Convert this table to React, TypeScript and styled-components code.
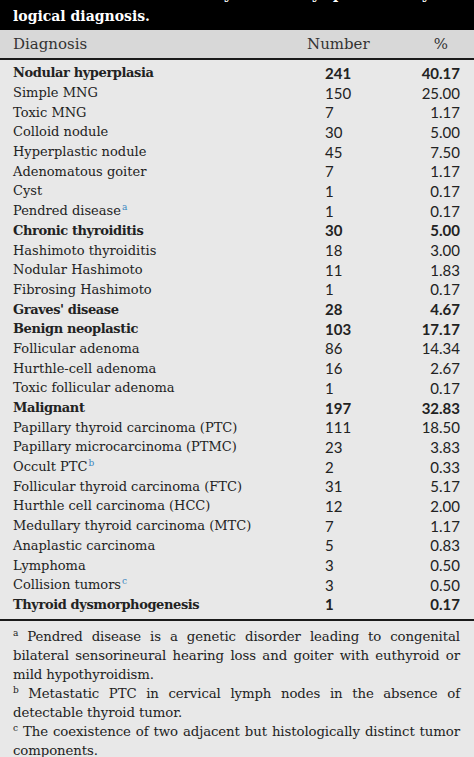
import React from 'react';
import styled, { createGlobalStyle } from 'styled-components';

const GlobalStyle = createGlobalStyle`
  html, body {
    margin: 0;
    padding: 0;
    background: #e8e8e8;
  }
`;

type RowType = {
    name: string
    number: string
    percent: string
    bold?: boolean
    note?: string
}

const rows: RowType[] = [
    { name: 'Nodular hyperplasia', number: '241', percent: '40.17', bold: true },
    { name: 'Simple MNG', number: '150', percent: '25.00' },
    { name: 'Toxic MNG', number: '7', percent: '1.17' },
    { name: 'Colloid nodule', number: '30', percent: '5.00' },
    { name: 'Hyperplastic nodule', number: '45', percent: '7.50' },
    { name: 'Adenomatous goiter', number: '7', percent: '1.17' },
    { name: 'Cyst', number: '1', percent: '0.17' },
    { name: 'Pendred disease', number: '1', percent: '0.17', note: 'a' },
    { name: 'Chronic thyroiditis', number: '30', percent: '5.00', bold: true },
    { name: 'Hashimoto thyroiditis', number: '18', percent: '3.00' },
    { name: 'Nodular Hashimoto', number: '11', percent: '1.83' },
    { name: 'Fibrosing Hashimoto', number: '1', percent: '0.17' },
    { name: "Graves' disease", number: '28', percent: '4.67', bold: true },
    { name: 'Benign neoplastic', number: '103', percent: '17.17', bold: true },
    { name: 'Follicular adenoma', number: '86', percent: '14.34' },
    { name: 'Hurthle-cell adenoma', number: '16', percent: '2.67' },
    { name: 'Toxic follicular adenoma', number: '1', percent: '0.17' },
    { name: 'Malignant', number: '197', percent: '32.83', bold: true },
    { name: 'Papillary thyroid carcinoma (PTC)', number: '111', percent: '18.50' },
    { name: 'Papillary microcarcinoma (PTMC)', number: '23', percent: '3.83' },
    { name: 'Occult PTC', number: '2', percent: '0.33', note: 'b' },
    { name: 'Follicular thyroid carcinoma (FTC)', number: '31', percent: '5.17' },
    { name: 'Hurthle cell carcinoma (HCC)', number: '12', percent: '2.00' },
    { name: 'Medullary thyroid carcinoma (MTC)', number: '7', percent: '1.17' },
    { name: 'Anaplastic carcinoma', number: '5', percent: '0.83' },
    { name: 'Lymphoma', number: '3', percent: '0.50' },
    { name: 'Collision tumors', number: '3', percent: '0.50', note: 'c' },
    { name: 'Thyroid dysmorphogenesis', number: '1', percent: '0.17', bold: true },
];

const notes = [
    { mark: 'a', text: 'Pendred disease is a genetic disorder leading to congenital bilateral sensorineural hearing loss and goiter with euthyroid or mild hypothyroidism.' },
    { mark: 'b', text: 'Metastatic PTC in cervical lymph nodes in the absence of detectable thyroid tumor.' },
    { mark: 'c', text: 'The coexistence of two adjacent but histologically distinct tumor components.' },
];

export default function App() {
    return (
        <>
            <GlobalStyle />
            <Page>
                <Caption>
                    <CaptionText>
                        Table 1 – Distribution of thyroidectomy specimens by histopatho-
                        <br />
                        logical diagnosis.
                    </CaptionText>
                </Caption>
                <HeaderRow>
                    <HeadCell>Diagnosis</HeadCell>
                    <HeadCell>Number</HeadCell>
                    <HeadPercent>%</HeadPercent>
                </HeaderRow>
                <Body>
                    {rows.map((r) => (
                        <Row key={r.name}>
                            <NameCell $bold={r.bold}>
                                {r.name}
                                {r.note && <NoteMark>{r.note}</NoteMark>}
                            </NameCell>
                            <NumCell $bold={r.bold}>{r.number}</NumCell>
                            <PercentCell $bold={r.bold}>{r.percent}</PercentCell>
                        </Row>
                    ))}
                </Body>
                <Footnotes>
                    {notes.map((n) => (
                        <Footnote key={n.mark}>
                            <FootMark>{n.mark}</FootMark> {n.text}
                        </Footnote>
                    ))}
                </Footnotes>
            </Page>
        </>
    );
}

const Page = styled.div`
    width: 474px;
    background: #e8e8e8;
    font-family: "DejaVu Serif", serif;
    color: #222;
`

const Caption = styled.div`
    height: 30px;
    background: #000;
    color: #fff;
    display: flex;
    flex-direction: column;
    justify-content: flex-end;
    overflow: hidden;
    padding: 0 13px 3px;
    box-sizing: border-box;
`

const CaptionText = styled.div`
    font-weight: bold;
    font-size: 14px;
    line-height: 22px;
    white-space: nowrap;
`

const HeaderRow = styled.div`
    height: 28px;
    background: #d8d8d8;
    border-bottom: 2px solid #1a1a1a;
    display: grid;
    grid-template-columns: 294px 90px 1fr;
    align-items: center;
    padding: 0 26px 0 13px;
    font-size: 15px;
    color: #333;
`

const HeadCell = styled.div``

const HeadPercent = styled.div`
    text-align: right;
`

const Body = styled.div`
    padding: 3px 0 5px;
    border-bottom: 2px solid #1a1a1a;
`

const Row = styled.div`
    height: 19.7px;
    display: grid;
    grid-template-columns: 312px 1fr 80px;
    align-items: center;
    padding: 0 14px 0 13px;
`

const NameCell = styled.div<{ $bold?: boolean }>`
    font-size: 13px;
    font-weight: ${(p) => (p.$bold ? 'bold' : 'normal')};
    letter-spacing: ${(p) => (p.$bold ? '-0.4px' : '0')};
    white-space: nowrap;
`

const NoteMark = styled.sup`
    color: #3a86c0;
    font-size: 9px;
    vertical-align: 5px;
    line-height: 0;
    margin-left: 1px;
`

const NumCell = styled.div<{ $bold?: boolean }>`
    font-family: Lato, "Open Sans", sans-serif;
    font-size: 15px;
    font-weight: ${(p) => (p.$bold ? 'bold' : 'normal')};
`

const PercentCell = styled(NumCell)`
    text-align: right;
`

const Footnotes = styled.div`
    padding: 6px 14px 6px 13px;
`

const Footnote = styled.p`
    margin: 0;
    font-size: 13.3px;
    letter-spacing: -0.1px;
    line-height: 19px;
    text-align: justify;
`

const FootMark = styled.sup`
    font-size: 9px;
    vertical-align: 5px;
    line-height: 0;
`
